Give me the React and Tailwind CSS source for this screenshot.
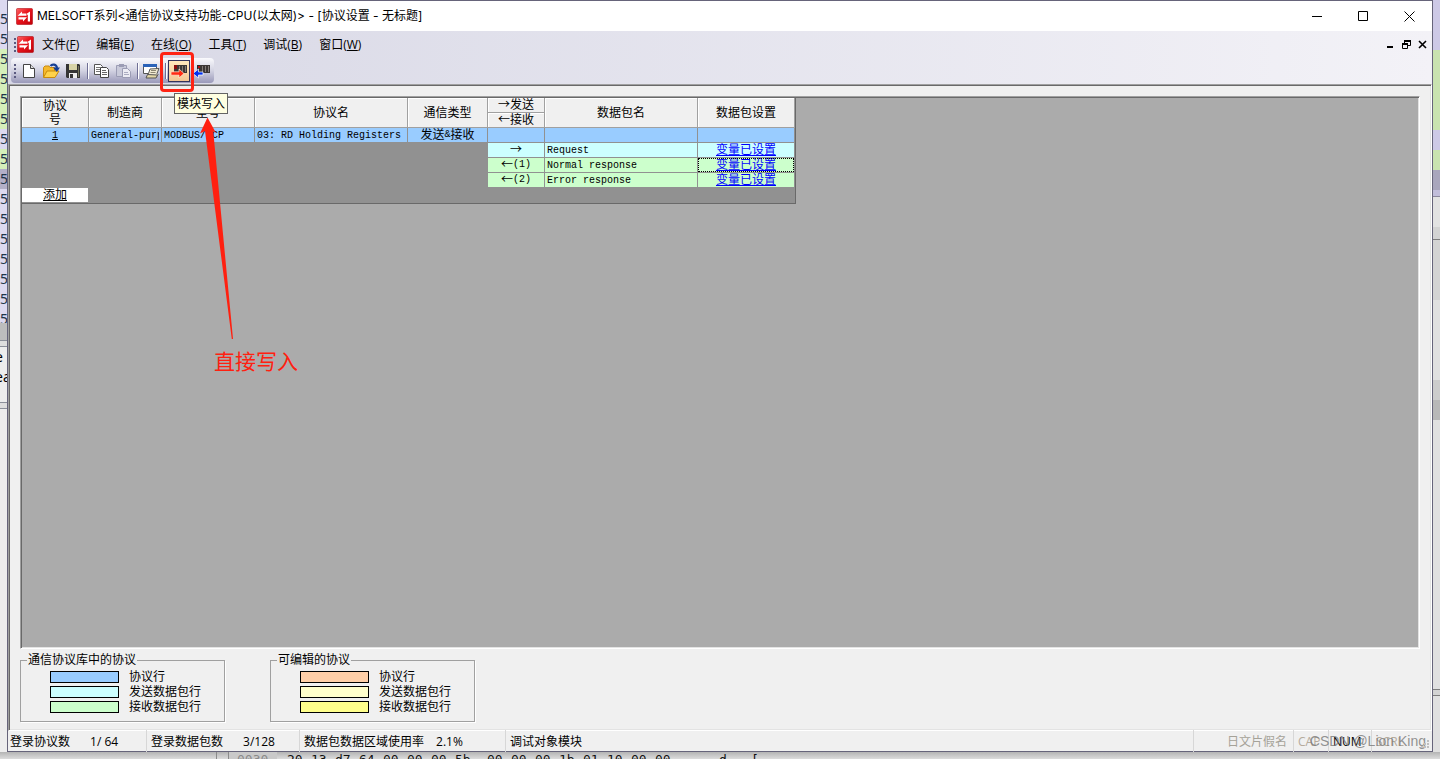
import { Fragment } from 'react'

const menus = [
  { label: '文件', hotkey: 'F' },
  { label: '编辑', hotkey: 'E' },
  { label: '在线', hotkey: 'O' },
  { label: '工具', hotkey: 'T' },
  { label: '调试', hotkey: 'B' },
  { label: '窗口', hotkey: 'W' },
]

const packets = [
  { direction: '→', index: '', name: 'Request', color: 'bg-[#ccffff]' },
  { direction: '←', index: '(1)', name: 'Normal response', color: 'bg-[#ccffcc]', focused: true },
  { direction: '←', index: '(2)', name: 'Error response', color: 'bg-[#ccffcc]' },
]

const legends = [
  {
    title: '通信协议库中的协议',
    rows: [
      { label: '协议行', color: 'bg-[#99ccff]' },
      { label: '发送数据包行', color: 'bg-[#ccffff]' },
      { label: '接收数据包行', color: 'bg-[#ccffcc]' },
    ],
  },
  {
    title: '可编辑的协议',
    rows: [
      { label: '协议行', color: 'bg-[#ffcfa8]' },
      { label: '发送数据包行', color: 'bg-[#ffffcc]' },
      { label: '接收数据包行', color: 'bg-[#ffff8c]' },
    ],
  },
]

const leftRows = [
  'bg-[#dcd9f0]', 'bg-[#dcd9f0]', 'bg-[#d5efba]', 'bg-[#d5efba]', 'bg-[#d5efba]', 'bg-[#d5efba]',
  'bg-[#dcd9f0]', 'bg-[#d5efba]', 'bg-[#b3b0c8]', 'bg-[#dcd9f0]', 'bg-[#dcd9f0]', 'bg-[#dcd9f0]',
  'bg-[#dcd9f0]', 'bg-[#dcd9f0]', 'bg-[#dcd9f0]', 'bg-[#dcd9f0]',
]

const rightBands = [
  'h-[50px] bg-[#cdc9e6]',
  'h-20 bg-[#c9e3b0]',
  'h-5 bg-[#cdc9e6]',
  'h-5 bg-[#c9e3b0]',
  'h-5 bg-[#a9a6bd]',
  'h-[6px] bg-[#c1bdda]',
  'h-px bg-[#8a879c]',
  'h-[30px] bg-[#e2e2e2]',
  'h-3 bg-[#d3d3d3]',
  'h-px bg-[#7d7d7d]',
  'h-[60px] bg-[#d3d3d3]',
  'h-20 bg-[#e0e0e0]',
  'h-5 bg-[#cccccc]',
  'h-5 bg-[#b8b8b8]',
  'h-[269px] bg-[#e0e0e0]',
  'h-[7px] border-y border-[#7d7d7d] bg-[#d3d3d3]',
]

const hexBytes = '20 13 d7 64 00 00 00 5b'.split(' ')
const hexBytes2 = '00 00 00 1b 01 10 00 00'.split(' ')

const sunken =
  'border border-t-[#a0a0a0] border-l-[#a0a0a0] border-r-white border-b-white p-px shadow-[inset_1px_1px_0_#696969,inset_-1px_-1px_0_#e3e3e3]'

const mono = 'font-["Liberation_Mono",monospace] text-[10px]'

function Logo() {
  return (
    <svg width="17" height="17" viewBox="0 0 17 17" aria-hidden="true">
      <defs>
        <linearGradient id="logoRed" x1="0" y1="0" x2="1" y2="1">
          <stop offset="0" stopColor="#ff6464" />
          <stop offset="0.45" stopColor="#e8141c" />
          <stop offset="1" stopColor="#c00008" />
        </linearGradient>
      </defs>
      <rect x="0.5" y="0.5" width="16" height="16" rx="1" fill="url(#logoRed)" stroke="#b01018" strokeWidth="0.6" />
      <path d="M1.500 7.800 6 3.500v2h4.500v2.300z" fill="#fff" />
      <path d="M2.500 9.200h8.500L7 13.500v-2H2.500z" fill="#fff" />
      <path d="M11 5.500 14 3.500v10h-2.200V6.800H11z" fill="#fff" />
    </svg>
  )
}

function NewIcon() {
  return (
    <svg width="16" height="16" viewBox="0 0 16 16" aria-hidden="true">
      <path d="M2.500 1.500h7l4 4v9h-11z" fill="#fff" stroke="#444" />
      <path d="M9.500 1.500v4h4" fill="#ddd" stroke="#444" />
    </svg>
  )
}

function OpenIcon() {
  return (
    <svg width="18" height="16" viewBox="0 0 18 16" aria-hidden="true">
      <path d="M1.500 14V4.500L3 3h4l1 1.500h4.500V8" fill="#f5b92c" stroke="#c98a10" />
      <path d="M1.500 14.500 5 8h12l-4 6.500z" fill="#ffd24a" stroke="#c98a0c" />
      <path d="M8.500 3c1.500-2.300 6-2 6.500 2" fill="none" stroke="#163f94" strokeWidth="2.200" />
      <path d="M11 4.500h7l-3.200 4.500z" fill="#163f94" />
    </svg>
  )
}

function SaveIcon() {
  return (
    <svg width="16" height="16" viewBox="0 0 16 16" aria-hidden="true">
      <path d="M1 1h13l1 1v13H2l-1-1z" fill="#353535" />
      <path d="M4 1h8v6H4z" fill="#d8d4a8" />
      <path d="M4 10h8v5H4z" fill="#eee" />
      <path d="M5 11h3v4H5z" fill="#353535" />
      <path d="M13.500 3v11" stroke="#77775c" />
    </svg>
  )
}

function CopyIcon() {
  return (
    <svg width="17" height="16" viewBox="0 0 17 16" aria-hidden="true">
      <path d="M1.500 1.500h6l2 2v8h-8z" fill="#fff" stroke="#555" />
      <path d="M3 4.500h4M3 6.500h4M3 8.500h4" stroke="#777" />
      <path d="M7.500 4.500h6l2 2v8h-8z" fill="#fff" stroke="#444" />
      <path d="M9 7.500h4M9 9.500h5M9 11.500h5" stroke="#666" />
    </svg>
  )
}

function PasteIcon() {
  return (
    <svg width="17" height="16" viewBox="0 0 17 16" aria-hidden="true">
      <path d="M1.500 2.500h10v11h-10z" fill="#c9cada" stroke="#9b9cb4" />
      <path d="M4 1h5v3H4z" fill="#9b9cb4" />
      <path d="M7.500 5.500h5l3 3v6h-8z" fill="#ececf4" stroke="#9b9cb4" />
      <path d="M9 9.500h4M9 11.500h5" stroke="#aaabc0" />
    </svg>
  )
}

function TransferSetupIcon() {
  return (
    <svg width="18" height="16" viewBox="0 0 18 16" aria-hidden="true">
      <path d="M1.500 1.500h13v9h-13z" fill="#fff" stroke="#555" />
      <path d="M1 1h14v3H1z" fill="#2a62b8" />
      <path d="m8 6 9-.500-2 5 1 1-2 3H4.500l2-4z" fill="#f1ead0" stroke="#555" />
      <path d="M9 7.500h5M8.500 9.500h5" stroke="#8c8772" />
      <path d="m5.500 11.500 10 .5-1.500 3H4z" fill="#e2d6a4" stroke="#555" />
    </svg>
  )
}

function ModuleIcon({ write }) {
  return (
    <svg width="18" height="16" viewBox="0 0 18 16" aria-hidden="true">
      <path d="M4 2h13v8H4z" fill="#3b3635" />
      <path d="M9.500 3v6M12.500 3v6M15.500 3v6" stroke="#817a76" />
      <path d="M4 2h3v4H4z" fill={write ? '#8c0d0d' : '#2b2b2b'} />
      {write ? (
        <path d="M1 8.800h8V6l5 4.500-5 4.500v-2.800H1z" fill="#ff2a12" stroke="#fff0d8" strokeWidth="0.700" />
      ) : (
        <>
          <path d="M5 3h2v2H5z" fill="#b01010" />
          <path d="M10 9H5.500V6L0 10.500 5.500 15v-3H10z" fill="#0030f0" stroke="#fff" strokeWidth="0.700" />
        </>
      )}
    </svg>
  )
}

function Grip() {
  return (
    <div className="flex flex-col gap-0.5">
      {[0, 1, 2, 3].map((dot) => (
        <span key={dot} className="size-0.5 bg-[#5b5b80]" />
      ))}
    </div>
  )
}

function Divider() {
  return <span className="mr-0.5 ml-[3px] h-4 w-px bg-[#6f6f95] shadow-[1px_0_0_#fff]" />
}

function ToolButton({ label, disabled, children }) {
  return (
    <button type="button" aria-label={label} disabled={disabled} className="flex h-[22px] w-[22px] items-center justify-center">
      {children}
    </button>
  )
}

function TitleBar() {
  return (
    <header className="flex h-[30px] items-center bg-white pl-2">
      <Logo />
      <h1 className="ml-1 flex-1 font-['Inter','Noto_Sans_CJK_SC',sans-serif] text-xs">
        MELSOFT系列&lt;通信协议支持功能-CPU(以太网)&gt; - [协议设置 - 无标题]
      </h1>
      <button type="button" aria-label="最小化" className="flex h-full w-[46px] items-center justify-center">
        <svg width="11" height="11" viewBox="0 0 11 11"><path d="M0 5.500h10" stroke="#000" /></svg>
      </button>
      <button type="button" aria-label="最大化" className="flex h-full w-[46px] items-center justify-center">
        <svg width="11" height="11" viewBox="0 0 11 11"><path d="M.5.500h9v9h-9z" fill="none" stroke="#000" /></svg>
      </button>
      <button type="button" aria-label="关闭" className="flex h-full w-[46px] items-center justify-center">
        <svg width="11" height="11" viewBox="0 0 11 11"><path d="m.5.500 10 10m0-10-10 10" stroke="#000" /></svg>
      </button>
    </header>
  )
}

function MenuBar() {
  return (
    <nav className="flex h-[27px] items-center pl-1.5">
      <Grip />
      <span className="ml-px">
        <Logo />
      </span>
      <div className="flex flex-1 gap-px">
        {menus.map((menu) => (
          <button key={menu.hotkey} type="button" className="px-2 text-xs">
            {menu.label}(<span className="underline">{menu.hotkey}</span>)
          </button>
        ))}
      </div>
      <button type="button" aria-label="最小化子窗口" className="flex w-4 justify-center">
        <svg width="9" height="9" viewBox="0 0 9 9"><path d="M1 7h6" stroke="#000" strokeWidth="2" /></svg>
      </button>
      <button type="button" aria-label="还原子窗口" className="flex w-4 justify-center">
        <svg width="9" height="9" viewBox="0 0 9 9">
          <path d="M2.500 3V.500h6v5H6" fill="none" stroke="#000" />
          <path d="M2 1h7M0 4h6" stroke="#000" strokeWidth="2" />
          <path d="M.5 3.500h5v5h-5z" fill="none" stroke="#000" />
        </svg>
      </button>
      <button type="button" aria-label="关闭子窗口" className="mr-0.5 flex w-4 justify-center">
        <svg width="9" height="9" viewBox="0 0 9 9"><path d="m1 1 7 7m0-7L1 8" stroke="#000" strokeWidth="1.600" /></svg>
      </button>
    </nav>
  )
}

function Toolbar() {
  return (
    <div className="flex pl-[3px]">
      <div role="toolbar" className="flex h-[25px] items-center rounded bg-linear-to-b from-[#fafafd] via-[#d3d3e2] to-[#9a99b9] pl-[3px] pr-px">
        <Grip />
        <span className="w-0.5" />
        <ToolButton label="新建"><NewIcon /></ToolButton>
        <ToolButton label="打开"><OpenIcon /></ToolButton>
        <ToolButton label="保存"><SaveIcon /></ToolButton>
        <Divider />
        <ToolButton label="复制"><CopyIcon /></ToolButton>
        <ToolButton label="粘贴" disabled><PasteIcon /></ToolButton>
        <Divider />
        <ToolButton label="连接目标设置"><TransferSetupIcon /></ToolButton>
        <Divider />
        <div className="relative">
          <button
            type="button"
            aria-label="模块写入"
            aria-describedby="write-tip"
            className="flex h-[22px] w-[22px] items-center justify-center border border-[#33335c] bg-linear-to-b from-[#ffe8bd] to-[#f2c795]"
          >
            <ModuleIcon write />
          </button>
          <span className="pointer-events-none absolute -top-2 -left-2 z-20 h-10 w-[34px] rounded-sm border-3 border-[#ff2314]" />
          <span
            id="write-tip"
            role="tooltip"
            className="absolute top-[33px] left-1.5 z-20 border border-[#646464] bg-[#ffffe1] px-0.5 text-xs leading-[19px] whitespace-nowrap"
          >
            模块写入
          </span>
        </div>
        <span className="w-px" />
        <ToolButton label="模块读取"><ModuleIcon /></ToolButton>
      </div>
    </div>
  )
}

function Th({ children, ...props }) {
  return (
    <th
      className="border-r border-b border-[#a0a0a0] bg-[#f0f0f0] p-0 text-xs leading-[14px] font-normal shadow-[inset_1px_1px_0_#fff]"
      {...props}
    >
      {children}
    </th>
  )
}

function Td({ className = '', textClass = '', children }) {
  return (
    <td className={`border-r border-b border-[#919191] p-0 ${className}`}>
      <div className={`flex h-[14px] items-center leading-[14px] whitespace-nowrap ${textClass}`}>{children}</div>
    </td>
  )
}

function ProtocolTable() {
  const left = `mx-0.5 overflow-hidden pt-0.5 ${mono}`
  return (
    <table className="w-[774px] table-fixed border-separate border-spacing-0 border-r border-b border-[#696969] bg-[#919191] text-xs">
      <colgroup>
        <col className="w-[67px]" />
        <col className="w-[73px]" />
        <col className="w-[93px]" />
        <col className="w-[153px]" />
        <col className="w-20" />
        <col className="w-[57px]" />
        <col className="w-[153px]" />
        <col className="w-[97px]" />
      </colgroup>
      <thead>
        <tr className="h-[15px]">
          <Th rowSpan={2}>协议<br />号</Th>
          <Th rowSpan={2}>制造商</Th>
          <Th rowSpan={2}>型号</Th>
          <Th rowSpan={2}>协议名</Th>
          <Th rowSpan={2}>通信类型</Th>
          <Th>→发送</Th>
          <Th rowSpan={2}>数据包名</Th>
          <Th rowSpan={2}>数据包设置</Th>
        </tr>
        <tr className="h-[15px]">
          <Th>←接收</Th>
        </tr>
      </thead>
      <tbody>
        <tr className="bg-[#99ccff]">
          <Td textClass={`justify-center pt-0.5 underline ${mono}`}>1</Td>
          <Td textClass={left}>General-purpose</Td>
          <Td textClass={left}>MODBUS/TCP</Td>
          <Td textClass={left}>03: RD Holding Registers</Td>
          <Td textClass="justify-center">发送<span className={mono}>&amp;</span>接收</Td>
          <Td />
          <Td />
          <Td />
        </tr>
        {packets.map((packet) => (
          <tr key={packet.name}>
            <td colSpan={5} className="p-0" />
            <Td className={packet.color} textClass="justify-center">
              {packet.direction}
              <span className={mono}>{packet.index}</span>
            </Td>
            <Td className={packet.color} textClass={left}>{packet.name}</Td>
            <Td
              className={packet.color}
              textClass={`justify-center ${packet.focused ? 'outline-1 -outline-offset-1 outline-dotted outline-black' : ''}`}
            >
              <a href="#variables" className="text-[#0000ff] underline">变量已设置</a>
            </Td>
          </tr>
        ))}
        <tr>
          <Td className="bg-white" textClass="justify-center">
            <a href="#add" className="underline">添加</a>
          </Td>
          <td colSpan={7} className="p-0" />
        </tr>
      </tbody>
    </table>
  )
}

function Legend({ title, rows }) {
  return (
    <fieldset className="w-[205px] border border-[#a0a0a0] pt-px pb-[7px] shadow-[1px_1px_0_#fff]">
      <legend className="ml-1.5 px-px text-xs">{title}</legend>
      {rows.map((row) => (
        <div key={row.label} className="flex h-[15px] items-center gap-2.5 pl-[29px]">
          <span className={`h-3 w-[69px] border border-black ${row.color}`} />
          <span className="text-xs leading-[14px]">{row.label}</span>
        </div>
      ))}
    </fieldset>
  )
}

function StatusBar() {
  return (
    <footer className="relative flex h-5 items-center bg-[#f0f0f0] text-xs leading-5 whitespace-nowrap">
      <div className="flex w-[139px] gap-5 border-r border-[#d7d7d7] pt-0.5 pl-0.5">
        <span>登录协议数</span>
        <span>1/ 64</span>
      </div>
      <div className="flex w-[153px] gap-5 border-r border-[#d7d7d7] pt-0.5 pl-1">
        <span>登录数据包数</span>
        <span>3/128</span>
      </div>
      <div className="flex w-[206px] gap-3 border-r border-[#d7d7d7] pt-0.5 pl-1">
        <span>数据包数据区域使用率</span>
        <span>2.1%</span>
      </div>
      <div className="flex-1 border-r border-[#d7d7d7] pt-0.5 pl-1">调试对象模块</div>
      <div className="w-[100px] border-r border-[#d7d7d7] pt-0.5 pr-1.5 text-right text-[#a5a298]">日文片假名</div>
      <div className="w-[35px] border-r border-[#d7d7d7] pt-0.5 pl-1 text-[#b5ab9c]">CAP</div>
      <div className="w-[43px] border-r border-[#d7d7d7] pt-0.5 pl-1">NUM</div>
      <div className="w-[60px] pt-0.5 pl-1 text-[#b5ab9c]">SCRL</div>
      <span className="absolute right-1.5 font-['Liberation_Sans',sans-serif] text-sm text-[#777777]/80">CSDN @Lion King</span>
      <svg width="9" height="9" viewBox="0 0 9 9" className="absolute right-0.5 bottom-0.5" aria-hidden="true">
        <path d="M6 0h2v2H6zM3 3h2v2H3zM6 3h2v2H6zM0 6h2v2H0zM3 6h2v2H3zM6 6h2v2H6z" fill="#bfbfbf" />
      </svg>
    </footer>
  )
}

function Annotation() {
  return (
    <div className="pointer-events-none absolute top-[116px] left-[191px] z-10 text-[#ff2010]">
      <svg width="40" height="224" viewBox="0 0 40 224" aria-hidden="true">
        <path d="M8.500.500 17 16 14.200 14 34 222h-1.200L6 14 1 16.500z" fill="currentColor" />
      </svg>
      <p className="ml-[15px] text-[21px] leading-10">直接写入</p>
    </div>
  )
}

// sliver of the editor that shows left of the window
function EditorEdge() {
  return (
    <div className="w-[7px] shrink-0 overflow-hidden bg-[#ededed] font-['Noto_Sans',sans-serif] text-sm text-[#1d3448]">
      <div className="h-[323px] overflow-hidden">
        <div className="h-[9px] bg-[#dcd9f0]" />
        {leftRows.map((color, i) => (
          <div key={i} className={`h-5 leading-5 ${color}`}>5</div>
        ))}
      </div>
      <div className="h-[17px] bg-[#bdbdbd]" />
      <div className="h-[7px] border-y border-[#8b8f99] bg-[#dedede]" />
      <div className="-ml-[5px] flex h-[55px] flex-col text-black">
        <span className="leading-5">e</span>
        <span className="leading-5">ea</span>
      </div>
      <div className="h-[7px] border-y border-[#8b8f99] bg-[#dedede]" />
    </div>
  )
}

// bottom row of the hex view behind the window
function HexEdge() {
  return (
    <div className="flex h-[7px] overflow-hidden bg-linear-to-b from-[#b4b4b4] to-[#dcdcdc] font-['DejaVu_Sans_Mono',monospace] text-[13px] leading-4 whitespace-nowrap text-[#111]">
      <div className="w-[217px] border-r border-[#8a8a8a]" />
      <div className="w-3 border-r border-[#8a8a8a]" />
      <div className="w-12 bg-[#c9c9c9] pl-2 text-[#8a8a8a]">0030</div>
      <div className="flex pl-2.5">
        {[hexBytes, hexBytes2].map((group, i) => (
          <Fragment key={i}>
            {group.map((byte, j) => (
              <span key={j} className="w-6">{byte}</span>
            ))}
            <span className="w-2" />
          </Fragment>
        ))}
        <span className="ml-8 w-8">d</span>
        <span>[</span>
      </div>
    </div>
  )
}

export default function App() {
  return (
    <div className="flex min-h-screen flex-col font-['Open_Sans','Noto_Sans_CJK_SC',sans-serif] text-black">
      <div className="flex flex-1">
        <EditorEdge />
        <main className="relative flex min-w-0 flex-1 flex-col border border-[#66647a] bg-[#f0f0f0]">
          <TitleBar />
          <div className="bg-linear-to-r from-[#d7d7e5] to-[#f3f2f7] pb-px">
            <MenuBar />
            <Toolbar />
          </div>
          <div className={`flex flex-1 flex-col ${sunken}`}>
            <div className="flex flex-1 flex-col px-2.5 pt-2.5">
              <div className={`flex-1 overflow-x-auto bg-[#ababab] ${sunken}`}>
                <ProtocolTable />
              </div>
              <div className="flex gap-[45px] pt-[3px] pb-[7px]">
                {legends.map((legend) => (
                  <Legend key={legend.title} {...legend} />
                ))}
              </div>
            </div>
          </div>
          <StatusBar />
          <Annotation />
        </main>
        <div className="w-[7px] shrink-0 bg-[#e0e0e0]">
          {rightBands.map((band, i) => (
            <div key={i} className={band} />
          ))}
        </div>
      </div>
      <HexEdge />
    </div>
  )
}
